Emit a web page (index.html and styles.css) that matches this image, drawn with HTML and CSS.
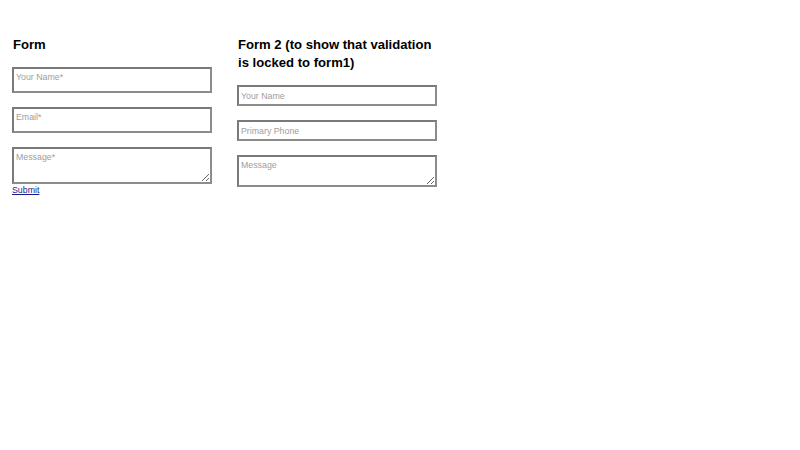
FILE: index.html
```html
<!DOCTYPE html>
<html>
<head>
<meta charset="utf-8">
<link rel="stylesheet" href="styles.css">
</head>
<body>
<div class="page">
  <form class="form form-one">
    <h2 class="title">Form</h2>
    <input class="field field-tall" type="text" placeholder="Your Name*">
    <input class="field field-tall" type="text" placeholder="Email*">
    <textarea class="area area-tall" placeholder="Message*"></textarea>
    <a class="submit" href="#">Submit</a>
  </form>
  <form class="form form-two">
    <h2 class="title">Form 2 (to show that validation is locked to form1)</h2>
    <input class="field" type="text" placeholder="Your Name">
    <input class="field" type="text" placeholder="Primary Phone">
    <textarea class="area" placeholder="Message"></textarea>
  </form>
</div>
</body>
</html>
```
FILE: styles.css
```css
html, body {
  margin: 0;
  padding: 0;
  background: #fff;
}
body {
  font-family: "Liberation Sans", Arial, sans-serif;
}
.page {
  display: flex;
  align-items: flex-start;
  gap: 25px;
  padding: 36px 0 0 12px;
}
.form {
  width: 200px;
  display: flex;
  flex-direction: column;
  margin: 0;
}
.title {
  margin: 0 0 13px;
  padding-left: 1px;
  font-size: 13.1px;
  line-height: 18px;
  font-weight: bold;
  color: #000;
}
.field, .area {
  box-sizing: border-box;
  width: 200px;
  margin: 0 0 14px;
  border: 2px solid #8c8c8c;
  border-top-color: #7a7a7a;
  border-left-color: #7a7a7a;
  font-family: "Liberation Sans", Arial, sans-serif;
  font-size: 8.8px;
  line-height: 11px;
  padding: 3px 2px;
  color: #000;
  background: #fff;
  outline: none;
}
.field {
  height: 21px;
}
.field-tall {
  height: 26px;
  padding: 2px 2px 9px;
}
.area {
  height: 32px;
  resize: vertical;
  display: block;
}
.area-tall {
  height: 37px;
  margin-bottom: 0;
}
.field::placeholder, .area::placeholder {
  color: #9e9e9e;
}
.submit {
  font-size: 8.8px;
  line-height: 11px;
  color: #1a1a8c;
  text-decoration: underline;
  align-self: flex-start;
  margin-top: 1px;
}
```
